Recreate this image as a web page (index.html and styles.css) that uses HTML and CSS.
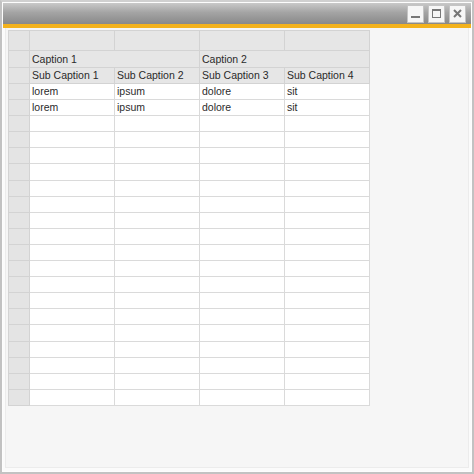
FILE: index.html
```html
<!DOCTYPE html>
<html lang="en">
<head>
    <meta charset="UTF-8">
    <title>Grid</title>
    <link rel="stylesheet" href="styles.css">
</head>
<body>
    <div class="window">
        <div class="titlebar">
            <div class="title-buttons">
                <button class="win-btn" title="Minimize">
                    <svg width="11" height="11" viewBox="0 0 11 11"><rect x="1" y="8" width="9" height="2" fill="#777"/></svg>
                </button>
                <button class="win-btn" title="Maximize">
                    <svg width="11" height="11" viewBox="0 0 11 11"><rect x="1.5" y="1.5" width="8" height="8" fill="none" stroke="#777" stroke-width="1"/><rect x="1" y="1" width="9" height="2" fill="#777"/></svg>
                </button>
                <button class="win-btn" title="Close">
                    <svg width="11" height="11" viewBox="0 0 11 11"><path d="M2 2 L9 9 M9 2 L2 9" stroke="#777" stroke-width="2"/></svg>
                </button>
            </div>
        </div>
        <div class="content">
            <div class="panel">
                <table class="grid">
                    <colgroup>
                        <col class="col-rowhead">
                        <col class="col-data">
                        <col class="col-data">
                        <col class="col-data">
                        <col class="col-data">
                    </colgroup>
                    <thead>
                        <tr class="row-top">
                            <th class="rowhead"></th><th></th><th></th><th></th><th></th>
                        </tr>
                        <tr class="row-caption">
                            <th class="rowhead"></th>
                            <th colspan="2">Caption 1</th>
                            <th colspan="2">Caption 2</th>
                        </tr>
                        <tr class="row-sub">
                            <th class="rowhead"></th>
                            <th>Sub Caption 1</th>
                            <th>Sub Caption 2</th>
                            <th>Sub Caption 3</th>
                            <th>Sub Caption 4</th>
                        </tr>
                    </thead>
                    <tbody>
                        <tr><td class="rowhead"></td><td>lorem</td><td>ipsum</td><td>dolore</td><td>sit</td></tr>
                        <tr><td class="rowhead"></td><td>lorem</td><td>ipsum</td><td>dolore</td><td>sit</td></tr>
                        <tr><td class="rowhead"></td><td></td><td></td><td></td><td></td></tr>
                        <tr><td class="rowhead"></td><td></td><td></td><td></td><td></td></tr>
                        <tr><td class="rowhead"></td><td></td><td></td><td></td><td></td></tr>
                        <tr><td class="rowhead"></td><td></td><td></td><td></td><td></td></tr>
                        <tr><td class="rowhead"></td><td></td><td></td><td></td><td></td></tr>
                        <tr><td class="rowhead"></td><td></td><td></td><td></td><td></td></tr>
                        <tr><td class="rowhead"></td><td></td><td></td><td></td><td></td></tr>
                        <tr><td class="rowhead"></td><td></td><td></td><td></td><td></td></tr>
                        <tr><td class="rowhead"></td><td></td><td></td><td></td><td></td></tr>
                        <tr><td class="rowhead"></td><td></td><td></td><td></td><td></td></tr>
                        <tr><td class="rowhead"></td><td></td><td></td><td></td><td></td></tr>
                        <tr><td class="rowhead"></td><td></td><td></td><td></td><td></td></tr>
                        <tr><td class="rowhead"></td><td></td><td></td><td></td><td></td></tr>
                        <tr><td class="rowhead"></td><td></td><td></td><td></td><td></td></tr>
                        <tr><td class="rowhead"></td><td></td><td></td><td></td><td></td></tr>
                        <tr><td class="rowhead"></td><td></td><td></td><td></td><td></td></tr>
                        <tr><td class="rowhead"></td><td></td><td></td><td></td><td></td></tr>
                        <tr><td class="rowhead"></td><td></td><td></td><td></td><td></td></tr>
                    </tbody>
                </table>
            </div>
        </div>
    </div>
</body>
</html>
```

FILE: styles.css
```css
html, body {
    margin: 0;
    padding: 0;
}
body {
    font-family: "Liberation Sans", Arial, sans-serif;
    font-size: 10.5px;
    color: #2b2b2b;
}
.window {
    box-sizing: border-box;
    width: 474px;
    height: 474px;
    border: 2px solid #c2c2c2;
    border-top-color: #d0d0d0;
    padding: 1px;
    background: #fdfdfd;
    display: flex;
    flex-direction: column;
}
.titlebar {
    height: 21px;
    flex: none;
    background: linear-gradient(to bottom, #c9c9c9 0%, #a4a4a4 45%, #898989 100%);
    border-bottom: 4px solid #f3b21c;
    display: flex;
    justify-content: flex-end;
    align-items: center;
}
.title-buttons {
    display: flex;
    gap: 4px;
    padding-right: 5px;
}
.win-btn {
    width: 17px;
    height: 18px;
    padding: 0;
    border: 1px solid #c4c4c4;
    background: #f6f6f6;
    display: flex;
    align-items: center;
    justify-content: center;
    cursor: pointer;
}
.content {
    flex: 1;
    display: flex;
    padding: 0 2px 3px 2px;
    background: #fbfbfb;
}
.panel {
    flex: 1;
    border: 1px solid #ececec;
    border-top: none;
    padding: 2px 2px 0 2px;
    background: #f6f6f6;
}
.grid {
    border-collapse: collapse;
    table-layout: fixed;
    width: 362px;
}
.col-rowhead { width: 21px; }
.col-data { width: 85px; }
.grid th,
.grid td {
    border: 1px solid #d3d3d3;
    padding: 0 0 0 2px;
    text-align: left;
    font-weight: normal;
    white-space: nowrap;
    overflow: hidden;
    line-height: 13px;
}
.grid thead th {
    background: #e6e6e6;
    color: #2a2a2a;
}
.grid td {
    background: #fff;
    border-color: #dadada;
    height: 15.1px;
}
.grid .rowhead {
    background: #e4e4e4;
    border-color: #d3d3d3;
}
.row-top th {
    height: 19px;
}
.row-caption th {
    height: 16px;
}
.row-sub th {
    height: 15px;
}
```
